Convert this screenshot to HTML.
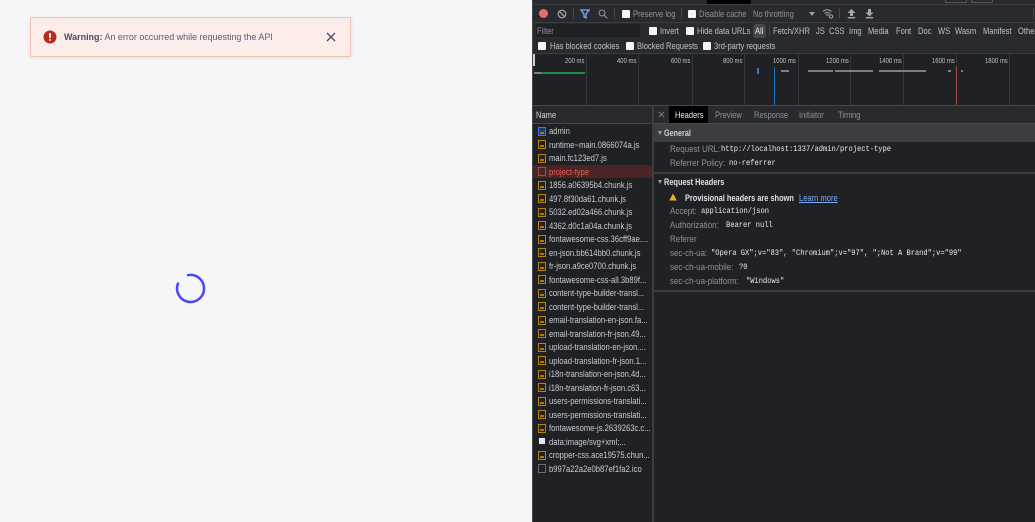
<!DOCTYPE html>
<html><head><meta charset="utf-8"><style>
*{box-sizing:border-box}
html,body{margin:0;padding:0}
body{width:1035px;height:522px;overflow:hidden;position:relative;background:#f6f6f9;font-family:"Liberation Sans",sans-serif}
.a{position:absolute}
.t{position:absolute;white-space:nowrap;font-size:9.5px;line-height:12px;margin-top:1px;color:#bdc1c6;transform:scaleX(.796);transform-origin:left center;filter:blur(.25px)}
.dim{color:#8f9296}
.m{font-family:"Liberation Mono",monospace;font-size:8px;color:#e8eaed;transform:scaleX(.885);margin-top:1px}
.cb{position:absolute;width:8px;height:8px;background:#f4f4f4;border-radius:1px}
.row{position:absolute;left:549px;white-space:nowrap;font-size:9.5px;line-height:12px;margin-top:1px;color:#c8cbcf;transform:scaleX(.805);transform-origin:left center;filter:blur(.25px)}
.ic{position:absolute;left:538px;width:8px;height:9px;border:1px solid #b5830f;background:#252118}
.ic:after{content:"";position:absolute;left:1px;top:4px;width:4px;height:2px;background:#a87a10}
.tl{position:absolute;top:54px;width:1px;height:51px;background:#35363a}
.tm{position:absolute;top:56px;font-size:7.5px;line-height:10px;color:#bdc1c6;white-space:nowrap;transform:scaleX(.79);transform-origin:left center;filter:blur(.2px)}
.bar{position:absolute;height:1.5px;background:#7e7f82}
.b{font-weight:bold}
</style></head><body>

<!-- alert -->
<div class="a" style="left:30px;top:17px;width:321px;height:40px;background:#fcecea;border:1px solid #f5c0b8;border-radius:2px;box-shadow:0 1px 4px rgba(33,33,52,.1)"></div>
<svg class="a" style="left:43px;top:30px" width="14" height="14" viewBox="0 0 14 14"><circle cx="7" cy="7" r="6.5" fill="#b72b1a"/><rect x="6" y="3" width="2" height="5" rx=".7" fill="#fff"/><rect x="6" y="9" width="2" height="2" rx="1" fill="#fff"/></svg>
<div class="t" style="left:64px;top:32px;margin-top:0;font-size:9.5px;color:#5a5a78;line-height:12px;transform:scaleX(.943)"><b style="color:#4a4a6a">Warning:</b> An error occurred while requesting the API</div>
<svg class="a" style="left:326px;top:32px" width="10" height="10" viewBox="0 0 10 10"><path d="M1 1L9 9M9 1L1 9" stroke="#4a4a6a" stroke-width="1.3"/></svg>

<!-- spinner -->
<svg class="a" style="left:175px;top:273px" width="31" height="31" viewBox="0 0 31 31"><path d="M3 10.5A13.5 13.5 0 1 0 13 2.2" fill="none" stroke="#4945ff" stroke-width="2.5" stroke-linecap="round"/></svg>

<!-- devtools -->
<div class="a" style="left:532px;top:0;width:503px;height:522px;background:#202124;border-left:1px solid #45474a"></div>
<div class="a" style="left:533px;top:0;width:502px;height:5px;background:#292a2d"></div>
<div class="a" style="left:707px;top:0;width:44px;height:4px;background:#000"></div>
<div class="a" style="left:533px;top:4px;width:502px;height:1px;background:#3c3d40"></div>
<div class="a" style="left:945px;top:-3px;width:22px;height:6px;border:1px solid #55575a"></div>
<div class="a" style="left:971px;top:-3px;width:22px;height:6px;border:1px solid #55575a"></div>

<!-- toolbar 1 -->
<div class="a" style="left:533px;top:5px;width:502px;height:18px;background:#292a2d;border-bottom:1px solid #3c3d40"></div>
<div class="a" style="left:539px;top:9px;width:9px;height:9px;border-radius:50%;background:#ee6b63"></div>
<svg class="a" style="left:557px;top:9px" width="10" height="10" viewBox="0 0 10 10"><circle cx="5" cy="5" r="3.8" fill="none" stroke="#a5a8ac" stroke-width="1.2"/><path d="M2.3 2.3L7.7 7.7" stroke="#a5a8ac" stroke-width="1.2"/></svg>
<div class="a" style="left:573px;top:8px;width:1px;height:11px;background:#45474a"></div>
<svg class="a" style="left:580px;top:9px" width="10" height="10" viewBox="0 0 10 10"><path d="M.8 1H9.2L6 5V9L4 8V5Z" fill="none" stroke="#7cacf8" stroke-width="1.3"/></svg>
<svg class="a" style="left:598px;top:9px" width="10" height="10" viewBox="0 0 10 10"><circle cx="4" cy="4" r="2.9" fill="none" stroke="#8a8d91" stroke-width="1.1"/><path d="M6.2 6.2L9.2 9.2" stroke="#8a8d91" stroke-width="1.2"/></svg>
<div class="a" style="left:614px;top:8px;width:1px;height:11px;background:#45474a"></div>
<div class="cb" style="left:622px;top:10px"></div>
<div class="t dim" style="left:633px;top:8px">Preserve log</div>
<div class="a" style="left:681px;top:8px;width:1px;height:11px;background:#45474a"></div>
<div class="cb" style="left:688px;top:10px"></div>
<div class="t dim" style="left:699px;top:8px">Disable cache</div>
<div class="t dim" style="left:753px;top:8px">No throttling</div>
<div class="a" style="left:809px;top:12px;border:3px solid transparent;border-top:4px solid #9aa0a6;border-bottom:0"></div>
<svg class="a" style="left:822px;top:8px" width="12" height="11" viewBox="0 0 12 11"><path d="M1 3.5Q5 0 9.5 3.5M2.5 5.5Q5 3.5 8 5.5M4 7.5L5.5 6.5L6.5 7.5" fill="none" stroke="#a5a8ac" stroke-width="1"/><circle cx="9" cy="8.5" r="1.7" fill="none" stroke="#a5a8ac"/></svg>
<div class="a" style="left:839px;top:8px;width:1px;height:11px;background:#45474a"></div>
<svg class="a" style="left:847px;top:9px" width="9" height="10" viewBox="0 0 9 10"><path d="M4.5 0L8.5 4H6V7H3V4H.5Z M.8 8H8.2V9.4H.8Z" fill="#a5a8ac"/></svg>
<svg class="a" style="left:865px;top:9px" width="9" height="10" viewBox="0 0 9 10"><path d="M3 0H6V3.5H8.5L4.5 7.5L.5 3.5H3Z M.8 8H8.2V9.4H.8Z" fill="#a5a8ac"/></svg>
<div class="a" style="left:1033px;top:8px;width:1px;height:11px;background:#45474a"></div>

<!-- filter row -->
<div class="a" style="left:533px;top:23px;width:502px;height:31px;background:#292a2d;border-bottom:1px solid #3c3d40"></div>
<div class="a" style="left:536px;top:24px;width:104px;height:13px;background:#202124"></div>
<div class="t dim" style="left:537px;top:25px">Filter</div>
<div class="cb" style="left:649px;top:27px"></div>
<div class="t" style="left:660px;top:25px">Invert</div>
<div class="cb" style="left:686px;top:27px"></div>
<div class="t" style="left:697px;top:25px">Hide data URLs</div>
<div class="a" style="left:753px;top:24px;width:13px;height:14px;background:#45474a;border-radius:3px"></div>
<div class="t" style="left:755px;top:25px;color:#e8eaed">All</div>
<div class="a" style="left:769px;top:25px;width:1px;height:11px;background:#45474a"></div>
<div class="t" style="left:773px;top:25px">Fetch/XHR</div>
<div class="t" style="left:816px;top:25px">JS</div>
<div class="t" style="left:829px;top:25px">CSS</div>
<div class="t" style="left:849px;top:25px">Img</div>
<div class="t" style="left:868px;top:25px">Media</div>
<div class="t" style="left:896px;top:25px">Font</div>
<div class="t" style="left:918px;top:25px">Doc</div>
<div class="t" style="left:938px;top:25px">WS</div>
<div class="t" style="left:955px;top:25px">Wasm</div>
<div class="t" style="left:983px;top:25px">Manifest</div>
<div class="t" style="left:1018px;top:25px">Other</div>
<div class="cb" style="left:538px;top:42px"></div>
<div class="t" style="left:550px;top:40px">Has blocked cookies</div>
<div class="cb" style="left:626px;top:42px"></div>
<div class="t" style="left:637px;top:40px">Blocked Requests</div>
<div class="cb" style="left:703px;top:42px"></div>
<div class="t" style="left:714px;top:40px">3rd-party requests</div>

<!-- timeline -->
<div class="a" style="left:533px;top:54px;width:2px;height:12px;background:#cfd2d6"></div>
<div class="tl" style="left:586px"></div><div class="tl" style="left:638px"></div><div class="tl" style="left:692px"></div><div class="tl" style="left:744px"></div><div class="tl" style="left:798px"></div><div class="tl" style="left:850px"></div><div class="tl" style="left:903px"></div><div class="tl" style="left:956px"></div><div class="tl" style="left:1009px"></div>
<div class="tm" style="left:565px">200 ms</div>
<div class="tm" style="left:617px">400 ms</div>
<div class="tm" style="left:671px">600 ms</div>
<div class="tm" style="left:723px">800 ms</div>
<div class="tm" style="left:773px">1000 ms</div>
<div class="tm" style="left:826px">1200 ms</div>
<div class="tm" style="left:879px">1400 ms</div>
<div class="tm" style="left:932px">1600 ms</div>
<div class="tm" style="left:985px">1800 ms</div>
<div class="bar" style="left:534px;top:72px;width:7px"></div>
<div class="a" style="left:541px;top:72px;width:44px;height:1.5px;background:#1e8e3e"></div>
<div class="a" style="left:757px;top:68px;width:2px;height:6px;background:#3b78c4"></div>
<div class="a" style="left:774px;top:67px;width:1px;height:38px;background:#1a73c4"></div>
<div class="bar" style="left:781px;top:70px;width:8px"></div>
<div class="bar" style="left:808px;top:70px;width:25px"></div>
<div class="bar" style="left:835px;top:70px;width:38px"></div>
<div class="bar" style="left:879px;top:70px;width:47px"></div>
<div class="bar" style="left:948px;top:70px;width:3px"></div>
<div class="bar" style="left:961px;top:70px;width:2px"></div>
<div class="a" style="left:956px;top:67px;width:1px;height:38px;background:#a8484a"></div>
<div class="a" style="left:533px;top:105px;width:502px;height:1px;background:#45474a"></div>

<!-- name column -->
<div class="a" style="left:533px;top:106px;width:119px;height:18px;background:#292a2d;border-bottom:1px solid #45474a"></div>
<div class="t" style="left:536px;top:109px;color:#cfd2d6">Name</div>
<div class="a" style="left:652px;top:106px;width:2px;height:416px;background:#3c3d40"></div>
<div class="a" style="left:533px;top:165px;width:119px;height:13px;background:#4b2526"></div>

<div class="ic" style="top:127px;border-color:#3b78e7;background:#1c3a78"></div><div class="row" style="top:125px">admin</div>
<div class="ic" style="top:140px"></div><div class="row" style="top:138.5px">runtime~main.0866074a.js</div>
<div class="ic" style="top:154px"></div><div class="row" style="top:152px">main.fc123ed7.js</div>
<div class="a" style="left:538px;top:167px;width:8px;height:9px;border:1px solid #a8484a"></div><div class="row" style="top:165.5px;color:#ee5c54">project-type</div>
<div class="ic" style="top:181px"></div><div class="row" style="top:179px">1856.a06395b4.chunk.js</div>
<div class="ic" style="top:194px"></div><div class="row" style="top:192.5px">497.8f30da61.chunk.js</div>
<div class="ic" style="top:208px"></div><div class="row" style="top:206px">5032.ed02a466.chunk.js</div>
<div class="ic" style="top:221px"></div><div class="row" style="top:219.5px">4362.d0c1a04a.chunk.js</div>
<div class="ic" style="top:235px"></div><div class="row" style="top:233px">fontawesome-css.36cff9ae....</div>
<div class="ic" style="top:248px"></div><div class="row" style="top:246.5px">en-json.bb614bb0.chunk.js</div>
<div class="ic" style="top:262px"></div><div class="row" style="top:260px">fr-json.a9ce0700.chunk.js</div>
<div class="ic" style="top:275px"></div><div class="row" style="top:273.5px">fontawesome-css-all.3b89f...</div>
<div class="ic" style="top:289px"></div><div class="row" style="top:287px">content-type-builder-transl...</div>
<div class="ic" style="top:302px"></div><div class="row" style="top:300.5px">content-type-builder-transl...</div>
<div class="ic" style="top:316px"></div><div class="row" style="top:314px">email-translation-en-json.fa...</div>
<div class="ic" style="top:329px"></div><div class="row" style="top:327.5px">email-translation-fr-json.49...</div>
<div class="ic" style="top:343px"></div><div class="row" style="top:341px">upload-translation-en-json....</div>
<div class="ic" style="top:356px"></div><div class="row" style="top:354.5px">upload-translation-fr-json.1...</div>
<div class="ic" style="top:370px"></div><div class="row" style="top:368px">i18n-translation-en-json.4d...</div>
<div class="ic" style="top:383px"></div><div class="row" style="top:381.5px">i18n-translation-fr-json.c63...</div>
<div class="ic" style="top:397px"></div><div class="row" style="top:395px">users-permissions-translati...</div>
<div class="ic" style="top:410px"></div><div class="row" style="top:408.5px">users-permissions-translati...</div>
<div class="ic" style="top:424px"></div><div class="row" style="top:422px">fontawesome-js.2639263c.c...</div>
<div class="a" style="left:539px;top:438px;width:6px;height:6px;background:#e8e8f0"></div><div class="row" style="top:435.5px">data:image/svg+xml;...</div>
<div class="ic" style="top:451px"></div><div class="row" style="top:449px">cropper-css.ace19575.chun...</div>
<div class="a" style="left:538px;top:464px;width:8px;height:9px;border:1px solid #6a6c70"></div><div class="row" style="top:462.5px">b997a22a2e0b87ef1fa2.ico</div>

<!-- details tabs -->
<div class="a" style="left:654px;top:106px;width:381px;height:18px;background:#292a2d;border-bottom:1px solid #45474a"></div>
<svg class="a" style="left:658px;top:111px" width="7" height="7" viewBox="0 0 7 7"><path d="M1 1L6 6M6 1L1 6" stroke="#77797d" stroke-width="1"/></svg>
<div class="a" style="left:669px;top:106px;width:39px;height:17px;background:#000"></div>
<div class="t" style="left:675px;top:109px;color:#e8eaed">Headers</div>
<div class="t dim" style="left:715px;top:109px">Preview</div>
<div class="t dim" style="left:754px;top:109px">Response</div>
<div class="t dim" style="left:799px;top:109px">Initiator</div>
<div class="t dim" style="left:838px;top:109px">Timing</div>

<!-- General -->
<div class="a" style="left:654px;top:124px;width:381px;height:18px;background:#3c3d40"></div>
<div class="a" style="left:658px;top:131px;border:2.5px solid transparent;border-top:4px solid #9aa0a6;border-bottom:0"></div>
<div class="t b" style="left:664px;top:127px;color:#cfd2d6;transform:scaleX(.76)">General</div>
<div class="t dim" style="left:670px;top:143px;transform:scaleX(.84)">Request URL:</div>
<div class="t m" style="left:721px;top:143px">http://localhost:1337/admin/project-type</div>
<div class="t dim" style="left:670px;top:157px;transform:scaleX(.84)">Referrer Policy:</div>
<div class="t m" style="left:729px;top:157px">no-referrer</div>
<div class="a" style="left:654px;top:172px;width:381px;height:2px;background:#3c3d40"></div>

<!-- Request headers -->
<div class="a" style="left:658px;top:180px;border:2.5px solid transparent;border-top:4px solid #9aa0a6;border-bottom:0"></div>
<div class="t b" style="left:664px;top:176px;color:#dfe1e5;transform:scaleX(.777)">Request Headers</div>
<svg class="a" style="left:669px;top:193px" width="8" height="8" viewBox="0 0 8 8"><path d="M4 .5L7.8 7.5H.2Z" fill="#f2ab26"/></svg>
<div class="t b" style="left:685px;top:192px;color:#dfe1e5;transform:scaleX(.778)">Provisional headers are shown</div>
<div class="t" style="left:799px;top:192px;color:#7cacf8;text-decoration:underline">Learn more</div>
<div class="t dim" style="left:670px;top:205px;transform:scaleX(.84)">Accept:</div>
<div class="t m" style="left:701px;top:205px">application/json</div>
<div class="t dim" style="left:670px;top:219px;transform:scaleX(.84)">Authorization:</div>
<div class="t m" style="left:726px;top:219px">Bearer null</div>
<div class="t dim" style="left:670px;top:233px;transform:scaleX(.84)">Referer</div>
<div class="t dim" style="left:670px;top:247px;transform:scaleX(.84)">sec-ch-ua:</div>
<div class="t m" style="left:711px;top:247px">"Opera GX";v="83", "Chromium";v="97", ";Not A Brand";v="99"</div>
<div class="t dim" style="left:670px;top:261px;transform:scaleX(.84)">sec-ch-ua-mobile:</div>
<div class="t m" style="left:739px;top:261px">?0</div>
<div class="t dim" style="left:670px;top:275px;transform:scaleX(.84)">sec-ch-ua-platform:</div>
<div class="t m" style="left:746px;top:275px">"Windows"</div>
<div class="a" style="left:654px;top:290px;width:381px;height:2px;background:#3c3d40"></div>
</body></html>
